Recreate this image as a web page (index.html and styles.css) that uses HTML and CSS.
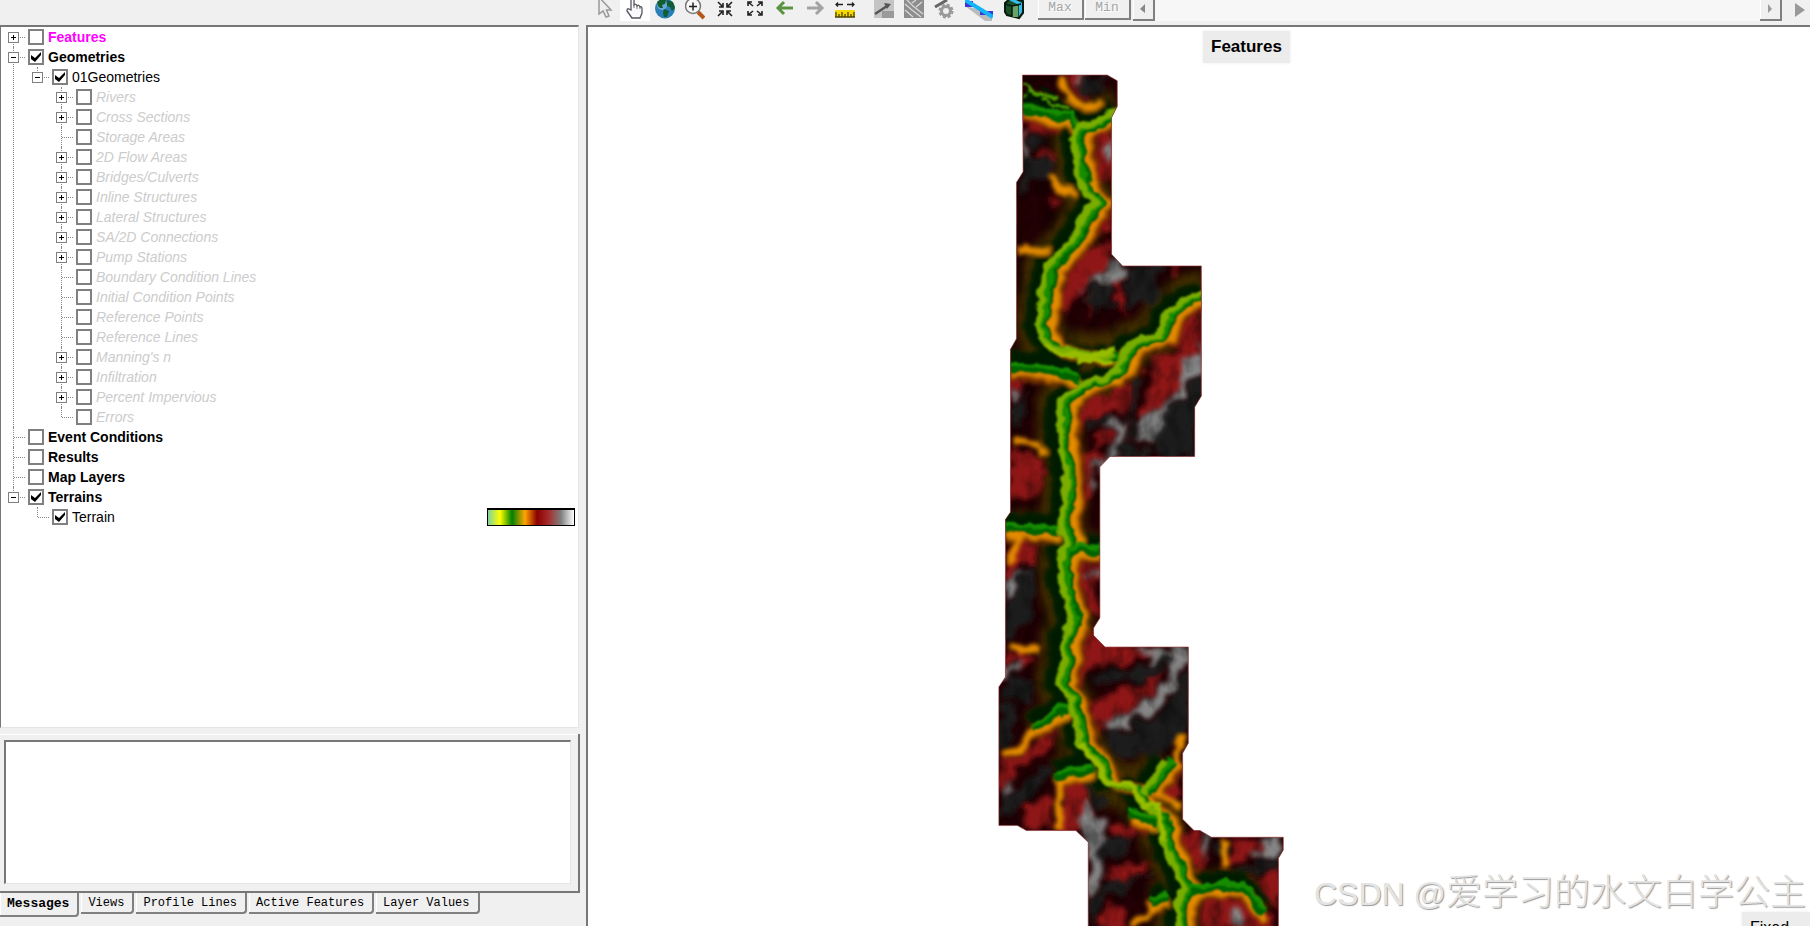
FILE: index.html
```html
<!DOCTYPE html>
<html lang="en">
<head>
<meta charset="utf-8">
<title>RAS Mapper</title>
<link rel="stylesheet" href="styles.css">
</head>
<body>
<header class="toolbar">
  <button class="tool" aria-label="Select"><svg width="20" height="20" viewBox="0 0 20 20"><path d="M4 -3V14L8 11L11 17L14 16L11.500 10H16Z" fill="#eee" stroke="#999" stroke-width="1.500"/></svg></button>
  <button class="tool active" aria-label="Pan"><svg width="20" height="20" viewBox="0 0 20 20"><path d="M6 10V-2Q8-3 9 0V5Q11 3 12 6Q14 4 15 7Q17 6 17 9V13L15 18H7L2 11Q2 8 4 9Z" fill="#fafafc" stroke="#555560" stroke-width="1.300"/><path d="M9 5V8M12 6V9M15 7V9" stroke="#777"/></svg></button>
  <button class="tool" aria-label="Full extent"><svg width="20" height="20" viewBox="0 0 20 20"><circle cx="10" cy="8.500" r="10" fill="#2b7fb8"/><circle cx="7" cy="5" r="5" fill="#69add6"/><path d="M2 2L7-2L11 0L10 4L7 5L8 8L5 8L3 6ZM12 0L18 2L20 8L17 11L15 7L12 6ZM9 9L14 11L12 17L9 17L8 13Z" fill="#145c31"/></svg></button>
  <button class="tool" aria-label="Zoom in"><svg width="20" height="20" viewBox="0 0 20 20"><path d="M13 12L19 18" stroke="#b5561a" stroke-width="4"/><circle cx="8" cy="6" r="7.500" fill="#f8f8f8" stroke="#777" stroke-width="1.500"/><path d="M4 6.500H12M8 2.500V10.500" stroke="#222" stroke-width="1.500"/></svg></button>
  <button class="tool" aria-label="Zoom in fixed"><svg width="20" height="20" viewBox="0 0 20 20"><path d="M3 2L8 7M17 2L12 7M3 16L8 11M17 16L12 11M4 7H8V3M16 7H12V3M4 11H8V15M16 11H12V15" fill="none" stroke="#222" stroke-width="1.600"/></svg></button>
  <button class="tool" aria-label="Zoom out fixed"><svg width="20" height="20" viewBox="0 0 20 20"><path d="M3 2L8 6M17 2L12 6M3 15L8 11M17 15L12 11M3 6V2H7M17 6V2H13M3 11V15H7M17 11V15H13" fill="none" stroke="#222" stroke-width="1.600"/></svg></button>
  <button class="tool" aria-label="Previous view"><svg width="20" height="20" viewBox="0 0 20 20"><path d="M9 2L3 8L9 14M3 8H18" fill="none" stroke="#5b9440" stroke-width="3"/></svg></button>
  <button class="tool" aria-label="Next view"><svg width="20" height="20" viewBox="0 0 20 20"><path d="M11 2L17 8L11 14M17 8H2" fill="none" stroke="#a3a3a3" stroke-width="3"/></svg></button>
  <button class="tool" aria-label="Measure"><svg width="20" height="20" viewBox="0 0 20 20"><path d="M1 4.500H8M12 4.500H19M3 2.500L1 4.500L3 6.500M17 2.500L19 4.500L17 6.500" fill="none" stroke="#222" stroke-width="1.300"/><path d="M0 10H20V17H0Z" fill="#f6d900"/><path d="M0 17H20M1 12V17M4 14V17M7 12V17M10 14V17M13 12V17M16 14V17M19 12V17" stroke="#4d4300" stroke-width="1.300"/></svg></button>
  <span class="gap"></span>
  <button class="tool" aria-label="Profile arrow"><svg width="20" height="20" viewBox="0 0 20 20"><path d="M0 0H20V18H0Z" fill="#c4c4c4"/><path d="M8 11H20V18H8Z" fill="#9a9a9a"/><path d="M1 14L13 6" stroke="#555" stroke-width="2.500"/><path d="M10 3L17 4L13 9Z" fill="#555"/></svg></button>
  <button class="tool" aria-label="Particle tracing"><svg width="20" height="20" viewBox="0 0 20 20"><path d="M0 0H20V18H0Z" fill="#8d8d8d"/><path d="M1 4L8 10L17 17M3 0L9 6L19 14M1 10L9 17M12 0L8 3M18 2L12 7" fill="none" stroke="#d8d8d8" stroke-width="1.300"/></svg></button>
  <button class="tool" aria-label="Arrow settings"><svg width="20" height="20" viewBox="0 0 20 20"><path d="M1 7L13 0" stroke="#666" stroke-width="3"/><circle cx="12" cy="11" r="4.500" fill="none" stroke="#999" stroke-width="3"/><circle cx="12" cy="11" r="6.500" fill="none" stroke="#999" stroke-width="2" stroke-dasharray="3 2.100"/></svg></button>
  <button class="tool wide" aria-label="Water surface"><svg width="28" height="21" viewBox="0 0 28 21"><path d="M0 6L12 9L27 17V21H20Z" fill="#bbb"/><path d="M0 1H8V7H0ZM15 11H28V15H15Z" fill="#3b38d2"/><path d="M0 0L10 6L28 17" fill="none" stroke="#15b3fa" stroke-width="4"/></svg></button>
  <button class="tool" aria-label="3D view"><svg width="20" height="20" viewBox="0 0 20 20"><path d="M1 3L7-2L19 1V13L15 18L3 15L1 12Z" fill="#19512b" stroke="#071a0d" stroke-width="2"/><path d="M8 6H14V17H8Z" fill="#6ba164"/><path d="M5 0L15 5V16L18 12V3L10-1Z" fill="#35bdf0"/><path d="M1 4L8 6V17M8 6L17 4" fill="none" stroke="#071a0d" stroke-width="1.500"/></svg></button>
  <span class="gap"></span>
  <button class="raised" disabled>Max</button>
  <button class="raised" disabled>Min</button>
  <div class="scroller">
    <button class="arrow" aria-label="Scroll left"><svg width="6" height="10" viewBox="0 0 6 10"><path d="M5 0V9L0 5Z" fill="#888"/></svg></button>
    <div class="track"></div>
    <button class="arrow" aria-label="Scroll right"><svg width="6" height="10" viewBox="0 0 6 10"><path d="M1 0V9L5 5Z" fill="#999"/></svg></button>
  </div>
  <button class="play" aria-label="Play"><svg width="12" height="14" viewBox="0 0 12 14"><path d="M1 0V14L11 7Z" fill="#999"/></svg></button>
</header>
<main class="workspace">
  <aside class="side">
    <ul class="tree">
      <li><div class="row"><button class="exp plus" aria-label="Expand"></button><label class="feature"><input type="checkbox">Features</label></div></li>
      <li><div class="row"><button class="exp" aria-label="Collapse"></button><label class="strong"><input type="checkbox" checked>Geometries</label></div>
        <ul>
          <li><div class="row"><button class="exp" aria-label="Collapse"></button><label><input type="checkbox" checked>01Geometries</label></div>
            <ul class="layers">
              <li><div class="row"><button class="exp plus" aria-label="Expand"></button><label><input type="checkbox">Rivers</label></div></li>
              <li><div class="row"><button class="exp plus" aria-label="Expand"></button><label><input type="checkbox">Cross Sections</label></div></li>
              <li><div class="row"><label><input type="checkbox">Storage Areas</label></div></li>
              <li><div class="row"><button class="exp plus" aria-label="Expand"></button><label><input type="checkbox">2D Flow Areas</label></div></li>
              <li><div class="row"><button class="exp plus" aria-label="Expand"></button><label><input type="checkbox">Bridges/Culverts</label></div></li>
              <li><div class="row"><button class="exp plus" aria-label="Expand"></button><label><input type="checkbox">Inline Structures</label></div></li>
              <li><div class="row"><button class="exp plus" aria-label="Expand"></button><label><input type="checkbox">Lateral Structures</label></div></li>
              <li><div class="row"><button class="exp plus" aria-label="Expand"></button><label><input type="checkbox">SA/2D Connections</label></div></li>
              <li><div class="row"><button class="exp plus" aria-label="Expand"></button><label><input type="checkbox">Pump Stations</label></div></li>
              <li><div class="row"><label><input type="checkbox">Boundary Condition Lines</label></div></li>
              <li><div class="row"><label><input type="checkbox">Initial Condition Points</label></div></li>
              <li><div class="row"><label><input type="checkbox">Reference Points</label></div></li>
              <li><div class="row"><label><input type="checkbox">Reference Lines</label></div></li>
              <li><div class="row"><button class="exp plus" aria-label="Expand"></button><label><input type="checkbox">Manning's n</label></div></li>
              <li><div class="row"><button class="exp plus" aria-label="Expand"></button><label><input type="checkbox">Infiltration</label></div></li>
              <li><div class="row"><button class="exp plus" aria-label="Expand"></button><label><input type="checkbox">Percent Impervious</label></div></li>
              <li><div class="row"><label><input type="checkbox">Errors</label></div></li>
            </ul>
          </li>
        </ul>
      </li>
      <li><div class="row"><label class="strong"><input type="checkbox">Event Conditions</label></div></li>
      <li><div class="row"><label class="strong"><input type="checkbox">Results</label></div></li>
      <li><div class="row"><label class="strong"><input type="checkbox">Map Layers</label></div></li>
      <li><div class="row"><button class="exp" aria-label="Collapse"></button><label class="strong"><input type="checkbox" checked>Terrains</label></div>
        <ul>
          <li><div class="row"><label><input type="checkbox" checked>Terrain</label><span class="ramp"></span></div></li>
        </ul>
      </li>
    </ul>
    <section class="output">
      <div class="page"><textarea class="log" aria-label="Messages" readonly></textarea></div>
      <nav class="tabs">
        <button class="tab current">Messages</button>
        <button class="tab">Views</button>
        <button class="tab">Profile Lines</button>
        <button class="tab">Active Features</button>
        <button class="tab">Layer Values</button>
      </nav>
    </section>
  </aside>
  <section class="map">
    <svg class="terrain" viewBox="-1176 -96 3666 2694" preserveAspectRatio="xMidYMin slice" role="img" aria-label="Terrain">
      <defs>
        <path id="edge" d="M128 48H382L412 65V142L395 175V585L428 620H664V1010L644 1043V1191H390L360 1222V1675L341 1705V1727L375 1762H625V2050L608 2080V2278L642 2312H660L694 2332H910V2370L895 2395V2620H325V2347L288 2312H140L113 2297H57V1882L77 1852V1380L92 1358V870L110 838V370L130 338Z"/>
        <clipPath id="clip"><use href="#edge"/></clipPath>
        <filter id="soft" filterUnits="userSpaceOnUse" x="0" y="0" width="1000" height="2700"><feTurbulence type="fractalNoise" baseFrequency="0.022" numOctaves="2" seed="8" result="n"/><feDisplacementMap in="SourceGraphic" in2="n" scale="70" xChannelSelector="R" yChannelSelector="G"/><feGaussianBlur stdDeviation="8"/></filter>
        <filter id="wide" filterUnits="userSpaceOnUse" x="0" y="0" width="1000" height="2700"><feGaussianBlur stdDeviation="14"/></filter>
        <filter id="fine" filterUnits="userSpaceOnUse" x="0" y="0" width="1000" height="2700"><feTurbulence type="fractalNoise" baseFrequency="0.028" numOctaves="2" seed="3" result="n"/><feDisplacementMap in="SourceGraphic" in2="n" scale="30" xChannelSelector="R" yChannelSelector="G"/><feGaussianBlur stdDeviation="3.500"/></filter>
        <filter id="glow" filterUnits="userSpaceOnUse" x="0" y="0" width="1000" height="2700"><feTurbulence type="fractalNoise" baseFrequency="0.028" numOctaves="2" seed="3" result="n"/><feDisplacementMap in="SourceGraphic" in2="n" scale="30" xChannelSelector="R" yChannelSelector="G"/><feGaussianBlur stdDeviation="6"/></filter>
        <filter id="grain" x="0" y="0" width="100%" height="100%"><feTurbulence type="fractalNoise" baseFrequency="0.022 0.014" numOctaves="3" seed="4"/><feColorMatrix values="0 0 0 0 0  0 0 0 0 0  0 0 0 0 0  2.800 0 0 0 -1.200"/></filter>
        <g id="main">
          <path d="M420 150L340 190L295 205L280 240L290 290L295 350L315 400L350 425L310 470L285 530L230 590L200 620L190 690L175 790L185 830L215 870L330 890L400 885"/>
          <path d="M680 695L620 715L560 760L535 825L440 860L415 925L370 955L300 975L240 1030L240 1100L240 1170L257 1220L255 1320L243 1400L262 1445L243 1480L243 1560L260 1630L275 1690L250 1730L250 1800L235 1870L270 1920L282 1970L300 2050L350 2105L375 2170L460 2182L485 2235L540 2270L550 2350L590 2430L610 2490L590 2540L595 2630"/>
          <path d="M560 2100L525 2145L490 2200"/>
        </g>
        <g id="side">
          <path d="M128 135L200 155L270 165L290 200"/>
          <path d="M85 912L180 918L240 930L300 950"/>
          <path d="M70 1395L160 1398L240 1405"/>
          <path d="M370 1462L300 1458L250 1480"/>
          <path d="M150 2000L200 1970L270 1925"/>
          <path d="M225 2140L270 2125L340 2120"/>
          <path d="M445 2250L490 2262L530 2280"/>
          <path d="M610 2485L700 2470L790 2470L820 2510L850 2550"/>
          <path d="M515 2515L560 2500"/>
        </g>
      </defs>
      <g clip-path="url(#clip)">
        <path d="M0 0H1000V2700H0Z" fill="#210104"/>
        <g filter="url(#wide)" fill="none" stroke="#402d00" stroke-width="135" stroke-linejoin="round"><use href="#main"/><use href="#side" stroke-width="80"/></g>
        <g filter="url(#soft)" fill="#8e1216">
          <path d="M245 45H320V130L285 110ZM130 165L235 195L220 230H130ZM175 270L235 285L190 320ZM395 195L325 240L335 340L380 385H400ZM400 440L325 490L330 525H400ZM400 545L340 560L260 620L230 700V765L270 730L340 680L400 610ZM210 410H250V440H215Z"/>
          <path d="M315 710H345L330 790ZM395 650H425L435 760H412ZM570 615H590V655H570ZM668 740L600 775L570 830L605 880L510 875V950L480 1080L560 1060L668 860ZM460 965L390 1000L300 1030L290 1105L400 1060L460 1040ZM360 1120L405 1125L300 1200V1320L275 1370L310 1360L360 1200ZM90 950L155 955L92 1010ZM90 1165L165 1180L205 1250L190 1310L90 1330Z"/>
          <path d="M110 1440L170 1435L155 1500L90 1570L70 1550ZM275 1500H365V1565L345 1600L365 1670L325 1650L290 1560ZM75 1770L185 1790L150 1820L75 1810ZM300 1725H345L530 1780L450 1815L340 1825L300 1870L275 1850ZM315 1965L360 1910L450 1890L550 1825L520 1900L420 1980L340 2010Z"/>
          <path d="M55 2100L130 2080L170 2030L240 2005L200 2070L120 2130L80 2190L55 2180ZM250 2160L315 2155L340 2260L300 2320H240ZM110 2240L200 2200L225 2220L205 2310H150ZM385 2295L500 2285L515 2320L400 2340ZM430 2410L525 2400L500 2430L400 2480L365 2440ZM355 2560L400 2530L435 2560V2620H360ZM610 2125L560 2160L525 2205L610 2215ZM590 2295L640 2315L690 2400L650 2435L610 2360ZM740 2415L750 2340L870 2345L840 2395ZM815 2460L900 2410V2550L840 2520ZM645 2560L700 2510L780 2505L880 2570L890 2630H655Z"/>
        </g>
        <g filter="url(#soft)" fill="#858585">
          <path d="M290 50H306V90L290 75ZM130 225L150 245L145 300H130ZM395 235L370 285L395 310ZM400 585L440 620L425 670L340 680L295 710L375 640ZM668 850L605 920L590 1000L540 1050L470 1095L455 1150L535 1140L620 980L668 930ZM430 1030L430 1080L365 1090L410 1130L390 1160L330 1240L380 1220L440 1160ZM90 1000L125 990L92 1035ZM355 1230L330 1300L360 1290Z"/>
          <path d="M75 1570L145 1530L110 1590L75 1630ZM75 1825L130 1800L80 1860ZM470 1765H625L595 1880L525 1960L410 2015L380 1990L480 1950L570 1840L560 1800L510 1815ZM310 1555L360 1520V1570ZM55 2190L105 2160L80 2225ZM295 2305L320 2210L375 2310L370 2450L325 2510V2350ZM655 2310L690 2320L675 2400ZM860 2335H915L905 2370L820 2400ZM745 2520L795 2560L765 2620Z"/>
        </g>
        <g filter="url(#soft)" fill="#1e1e1e">
          <path d="M308 48H380L365 100L310 125ZM145 235L220 230L160 270ZM125 290L250 300L190 345L110 430ZM430 622H550L520 730L440 750ZM300 720L385 665L415 745L360 760ZM668 930L605 1010L520 1135L545 1195H650V1040L668 1010ZM458 930H482L462 1140L450 1130ZM92 1035L155 1000L130 1080L92 1100ZM430 1160L520 1170V1195H420ZM315 1085L380 1070L400 1095L320 1120Z"/>
          <path d="M77 1640L155 1500L165 1620L130 1720L77 1740ZM55 1890L90 1850L160 1860L150 1920H55ZM350 1835L500 1825L550 1775L575 1795L520 1860L330 1870ZM590 1890L630 1820V1990L560 2080L450 2090L430 2010L540 1970ZM60 1940L110 1930L95 2050L60 2070ZM55 2220L110 2190L185 2120L230 2130L110 2245L55 2300ZM360 2350L480 2325L400 2400L360 2410ZM325 2510L400 2460L520 2440L380 2520L325 2600ZM695 2340L735 2345L710 2420ZM795 2425L900 2375L890 2425L750 2450ZM315 2160L340 2170L400 2240L360 2260ZM365 2000L420 2010L480 2110L400 2080Z"/>
        </g>
        <path d="M0 0H1000V2700H0Z" filter="url(#grain)" opacity="0.350"/>
        <g filter="url(#glow)" fill="none" stroke-linejoin="round">
          <g stroke="#7a3000" stroke-width="30"><use href="#main" x="46" y="12"/><use href="#side" x="4" y="34"/></g>
          <g stroke="#061c00" stroke-width="50"><use href="#main" x="-18" y="-4"/><use href="#side" x="-4" y="-12"/></g>
          <g stroke="#e58c00" stroke-width="21"><use href="#main" x="38" y="10"/><use href="#side" x="4" y="28"/><path d="M80 1520Q108 1500 110 1450L120 1435M65 2085L120 2075L155 2020L235 1980M240 2310V2160M580 2120L608 2020M110 570L210 580M100 1145L170 1155L200 1185M210 345L240 390L290 410M240 60L270 110L310 150L370 130M90 1765L180 1775M500 2580L515 2530M450 2590L510 2570M740 2340L730 2420M545 2210L600 2240"/></g>
        </g>
        <g filter="url(#fine)" fill="none" stroke-linejoin="round">
          <g stroke="#066400" stroke-width="26"><use href="#main" x="18" y="4"/><use href="#side" x="2" y="10"/></g>
          <g stroke="#128d00" stroke-width="13"><use href="#main" x="16" y="3"/><use href="#side"/></g>
          <g stroke="#79ae00" stroke-width="19"><use href="#main"/><path d="M128 110L160 95L195 110L240 120M128 75L170 105L220 140L265 145" stroke="#4fa500" stroke-width="9"/><path d="M195 855L230 885L340 890L410 870M290 900L400 905M300 2050L350 2110L375 2170H455L470 2200L490 2240H535L550 2340" stroke="#98bd00" stroke-width="14"/></g>
          <path d="M135 100L190 120M140 125L200 130M180 85L225 110" stroke="#061500" stroke-width="8"/>
        </g>
      </g>
      <use href="#edge" fill="none" stroke="#a04548" stroke-width="2"/>
    </svg>
    <div class="caption">Features</div>
    <div class="status">Fixed</div>
    <div class="watermark"><span class="latin">CSDN @</span>爱学习的水文白学公主</div>
  </section>
</main>
</body>
</html>
```

FILE: styles.css
```css
* { box-sizing: border-box; }
body {
  margin: 0;
  height: 100vh;
  overflow: hidden;
  display: flex;
  flex-direction: column;
  background: #f0f0f0;
  color: #000;
  font: 14px/20px "Liberation Sans", Arial, sans-serif;
}
button { margin: 0; padding: 0; border: 0; background: none; font: inherit; color: inherit; }
ul { list-style: none; margin: 0; padding: 0; }
svg { display: block; }

.toolbar {
  flex: none;
  height: 25px;
  padding-left: 590px;
  display: flex;
  align-items: flex-start;
}
.tool { flex: none; width: 30px; height: 21px; display: flex; justify-content: center; }
.tool.wide { width: 40px; }
.tool.active { background: #fff; }
.gap { flex: none; width: 9px; }
.raised {
  flex: none;
  width: 46px;
  height: 20px;
  padding-bottom: 2px;
  border: solid #808080;
  border-width: 0 2px 2px 0;
  box-shadow: inset 1px 0 #fff;
  color: #a6a6a6;
  text-shadow: 1px 1px #fff;
  font: 13px/16px "Liberation Mono", monospace;
  margin-right: 1px;
}
.scroller { flex: 1; height: 21px; margin-left: 1px; display: flex; }
.track { flex: 1; background: #f7f7f7; }
.arrow {
  width: 22px;
  display: flex;
  justify-content: center;
  padding-top: 4px;
  border: solid #808080;
  border-width: 0 2px 2px 0;
  box-shadow: inset 1px 0 #fff;
}
.play { flex: none; width: 28px; padding: 3px 0 0 12px; }

.workspace { flex: 1; min-height: 0; display: flex; }
.side { flex: none; width: 586px; padding-right: 6px; display: flex; flex-direction: column; }
.tree {
  flex: 1;
  min-height: 0;
  margin-right: 1px;
  padding: 0 3px 0 7px;
  background: #fff;
  border: solid #e4e4e4;
  border-width: 2px 1px 1px 1px;
  border-top-color: #777;
  border-left-color: #777;
}
.tree ul { margin-left: 24px; }
.tree li { position: relative; }
.tree li::before {
  content: "";
  position: absolute;
  left: 5px;
  top: 0;
  bottom: 0;
  border-left: 1px dotted #888;
}
.tree li:last-child::before { bottom: auto; height: 10px; }
.tree > li:first-child::before { top: 10px; }
.row { position: relative; height: 20px; display: flex; align-items: center; }
.row::before {
  content: "";
  position: absolute;
  left: 6px;
  width: 11px;
  top: 10px;
  border-top: 1px dotted #888;
}
.exp {
  position: absolute;
  left: 0;
  top: 5px;
  width: 11px;
  height: 11px;
  border: 1px solid #808080;
  background: linear-gradient(#000, #000) center / 5px 1px no-repeat, #fff;
}
.exp.plus {
  background: linear-gradient(#000, #000) center / 5px 1px no-repeat, linear-gradient(#000, #000) center / 1px 5px no-repeat, #fff;
}
.row label { margin-left: 20px; display: flex; align-items: center; gap: 4px; white-space: nowrap; line-height: 18px; }
.row input {
  appearance: none;
  width: 16px;
  height: 16px;
  margin: 0;
  border: 2px solid #808080;
  background: #fff;
}
.row input:checked::after {
  content: "";
  display: block;
  width: 12px;
  height: 12px;
  background: #000;
  clip-path: polygon(1px 4px, 5px 7px, 11px 1px, 11px 4px, 5px 11px, 1px 8px);
}
.strong, .feature { font-weight: bold; }
.feature { color: #f0f; }
.layers { color: #ccc; font-style: italic; }
.ramp {
  margin-left: auto;
  width: 88px;
  height: 18px;
  border: 1px solid #000;
  border-top-width: 2px;
  background: linear-gradient(90deg, #7fd4a0, #ff0 14%, #008000 28%, #ffa500 43%, #8b0000 57%, #a52a2a 70%, #808080 85%, #fff);
}

.output { flex: none; height: 192px; margin-top: 6px; display: flex; flex-direction: column; }
.page {
  height: 159px;
  padding: 6px 7px 7px 4px;
  border: solid #777;
  border-width: 0 2px 2px 0;
  box-shadow: inset 0 1px #fff;
}
.log {
  display: block;
  width: 100%;
  height: 100%;
  resize: none;
  background: #fff;
  border: solid #e4e4e4;
  border-width: 2px 1px 1px 2px;
  border-top-color: #777;
  border-left-color: #777;
}
.tabs { display: flex; align-items: flex-start; gap: 2px; font: 12px/20px "Liberation Mono", monospace; }
.tab {
  height: 21px;
  border: solid #808080;
  border-width: 0 2px 2px 0;
  border-bottom-right-radius: 4px;
  box-shadow: inset 1px 0 #fff;
  padding: 0 8px 0 7px;
}
.tab.current { height: 24px; font-weight: bold; font-size: 13px; }

.map {
  flex: 1;
  min-width: 0;
  position: relative;
  overflow: hidden;
  background: #fff;
  border: solid #777;
  border-width: 2px 0 0 2px;
}
.terrain { width: 100%; height: 100%; }
.caption {
  position: absolute;
  left: 50%;
  top: 4px;
  margin-left: 4px;
  padding: 5px 8px;
  background: #ececec;
  box-shadow: 0 0 3px #ececec;
  font: bold 17px/22px "Liberation Sans", Arial, sans-serif;
}
.status {
  position: absolute;
  right: 0;
  bottom: -22px;
  width: 68px;
  height: 36px;
  padding: 6px 8px;
  background: #ececec;
  box-shadow: 0 0 3px #ececec;
  font: 16px/20px "Liberation Sans", Arial, sans-serif;
}
.watermark {
  position: absolute;
  right: 4px;
  bottom: 8px;
  color: #e4e4e4;
  text-shadow: 1px 1px 1px #999;
  font: 300 36px/48px "Liberation Sans", "Noto Sans CJK SC", sans-serif;
  white-space: nowrap;
}
.latin { font-size: 32px; }
```
